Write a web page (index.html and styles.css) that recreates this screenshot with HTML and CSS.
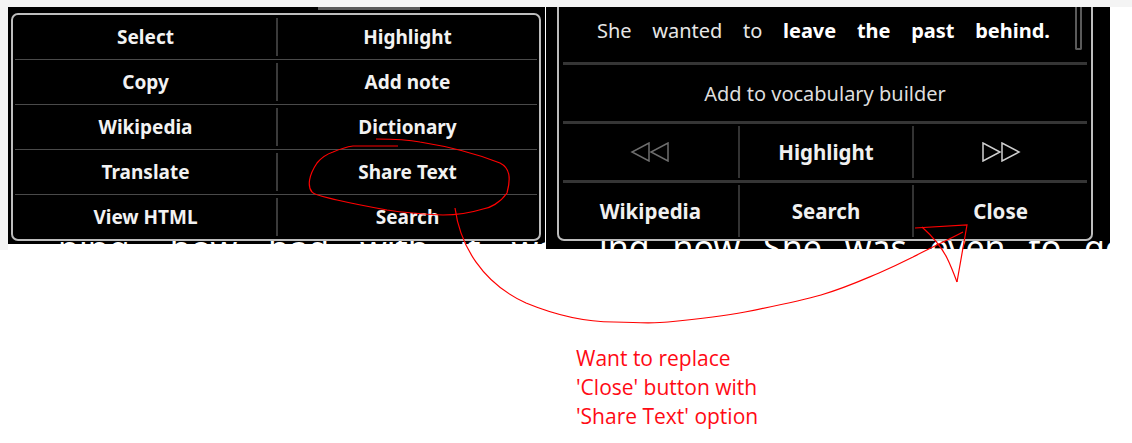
FILE: index.html
```html
<!DOCTYPE html>
<html>
<head>
<meta charset="utf-8">
<title>Selection popups</title>
<link rel="stylesheet" href="styles.css">
</head>
<body>
<div class="strip"></div>

<div class="shots">
  <!-- old selection menu -->
  <div class="shot shot-left">
    <div class="scrollmark"></div>
    <div class="menu">
      <div class="menu-row"><span class="menu-item">Select</span><span class="menu-item">Highlight</span></div>
      <div class="menu-row"><span class="menu-item">Copy</span><span class="menu-item">Add note</span></div>
      <div class="menu-row"><span class="menu-item">Wikipedia</span><span class="menu-item">Dictionary</span></div>
      <div class="menu-row"><span class="menu-item">Translate</span><span class="menu-item">Share Text</span></div>
      <div class="menu-row"><span class="menu-item">View HTML</span><span class="menu-item">Search</span></div>
    </div>
    <div class="page-text page-text-left">ning. how had with it wasn</div>
  </div>

  <!-- dictionary popup -->
  <div class="shot shot-right">
    <div class="popup">
      <div class="popup-text">
        <span>She</span><span>wanted</span><span>to</span><b>leave</b><b>the</b><b>past</b><b>behind.</b>
      </div>
      <div class="popup-row popup-wide">Add to vocabulary builder</div>
      <div class="popup-row">
        <span class="popup-item">
          <svg class="nav-icon dim" width="40" height="20" viewBox="0 0 40 20">
            <polygon points="19,1 19,19 2,10"/>
            <polygon points="38,1 38,19 21,10"/>
          </svg>
        </span>
        <span class="popup-item">Highlight</span>
        <span class="popup-item">
          <svg class="nav-icon" width="40" height="20" viewBox="0 0 40 20">
            <polygon points="2,1 2,19 19,10"/>
            <polygon points="21,1 21,19 38,10"/>
          </svg>
        </span>
      </div>
      <div class="popup-row">
        <span class="popup-item">Wikipedia</span>
        <span class="popup-item">Search</span>
        <span class="popup-item">Close</span>
      </div>
      <div class="scrollbar"></div>
    </div>
    <div class="page-text page-text-right">ing now She was even to get</div>
  </div>
</div>

<div class="note">Want to replace<br>'Close' button with<br>'Share Text' option</div>

<!-- red pen marks -->
<svg class="scribble" width="1132" height="443" viewBox="0 0 1132 443">
  <path d="M376,139 C395,139 410,140 420,142 C445,146 470,151 500,163 C510,168 511,178 507,193 C500,203 490,208 483,209 C470,213 455,215 443,215 C420,214 400,212 387,210 C365,206 350,203 337,200 C325,197 314,195 312,192 C307,186 309,175 317,163 C322,157 327,154 333,152 C340,149 346,147 353,146 L398,146"/>
  <path d="M455,208 C460,245 482,283 526,303 C560,317 590,322 614,322 C640,323 660,323 668,322 C700,319 730,315 745,312 C780,305 800,301 821,295 C845,288 860,281 879,273 C895,266 905,261 913,257 C930,248 948,240 963,232"/>
  <path d="M915,228 L967,225 L957,282"/>
  <path d="M922,227 C932,236 942,248 947,258 C951,266 954,274 957,282"/>
</svg>
</body>
</html>
```

FILE: styles.css
```css
/* Two reader screenshots and a note */

body
{ margin: 0;
background-color: #fff;
font-family: "Noto Sans", "Open Sans", sans-serif;
}

div.strip
{ height: 7px;
background-color: #f4f4f4;
}

div.shots
{ display: flex;
align-items: flex-start;
padding-left: 8px;
background: linear-gradient(to right, #f4f4f4 8px, #fff 8px);
height: 243px;
}

div.shot
{ background-color: #000;
overflow: hidden;
}

/* left: selection menu */

div.shot-left
{ width: 537px;
height: 237px;
}

div.scrollmark
{ margin-left: 310px;
width: 102px;
height: 3px;
background-color: #5a5a5a;
}

div.menu
{ position: relative;
z-index: 1;
margin: 3px 0 0 3px;
width: 522px;
padding: 0 2px;
border: 2px solid #bdbdbd;
border-radius: 7px;
background-color: #000;
}

div.menu-row
{ display: grid;
grid-template-columns: 1fr 1fr;
height: 44px;
}

div.menu-row + div.menu-row
{ border-top: 1px solid #4a4a4a;
}

span.menu-item
{ display: flex;
align-items: center;
justify-content: center;
margin: 3px 0;
color: #f2f2f2;
font-size: 19px;
font-weight: bold;
}

span.menu-item + span.menu-item
{ border-left: 2px solid #3a3a3a;
}

/* right: dictionary popup */

div.shot-right
{ margin-left: 1px;
width: 564px;
height: 242px;
padding-left: 11px;
box-sizing: border-box;
}

div.popup
{ position: relative;
z-index: 1;
width: 532px;
border: 2px solid #bdbdbd;
border-top: none;
border-radius: 0 0 7px 7px;
background-color: #000;
}

div.popup-text
{ display: flex;
justify-content: space-between;
align-items: center;
box-sizing: border-box;
height: 55px;
padding: 0 41px 9px 38px;
color: #e6e6e6;
font-size: 20px;
}

div.popup-text b
{ color: #fff;
}

div.popup-row
{ display: grid;
grid-template-columns: 1fr 1fr 1fr;
margin: 0 4px;
height: 56px;
border-top: 3px solid #353535;
}

div.popup-row:last-of-type
{ height: 55px;
}

div.popup-wide
{ display: flex;
align-items: center;
justify-content: center;
color: #dedede;
font-size: 20px;
}

span.popup-item
{ display: flex;
align-items: center;
justify-content: center;
margin: 2px 0;
color: #f0f0f0;
font-size: 20.5px;
font-weight: bold;
}

span.popup-item + span.popup-item
{ border-left: 2px solid #333;
}

svg.nav-icon polygon
{ fill: none;
stroke: #cfcfcf;
stroke-width: 1.5;
}

svg.nav-icon.dim polygon
{ stroke: #6e6e6e;
}

div.scrollbar
{ position: absolute;
top: 0;
right: 9px;
width: 3px;
height: 41px;
border: 2px solid #5a5a5a;
border-top: none;
border-radius: 0 0 2px 2px;
}

/* page text peeking out under the popups */

div.page-text
{ color: #fff;
font-size: 34px;
line-height: 12px;
white-space: nowrap;
}

div.page-text-left
{ padding: 1px 0 0 50px;
word-spacing: 22px;
}

div.page-text-right
{ padding-left: 42px;
word-spacing: 14px;
}

/* annotation */

div.note
{ margin: 94px 0 0 576px;
color: #ff0a14;
font-family: "Open Sans", "Noto Sans", sans-serif;
font-size: 21px;
line-height: 29px;
}

svg.scribble
{ position: absolute;
z-index: 2;
top: 0;
left: 0;
pointer-events: none;
}

svg.scribble path
{ fill: none;
stroke: #f00;
stroke-width: 1.2;
}
```
